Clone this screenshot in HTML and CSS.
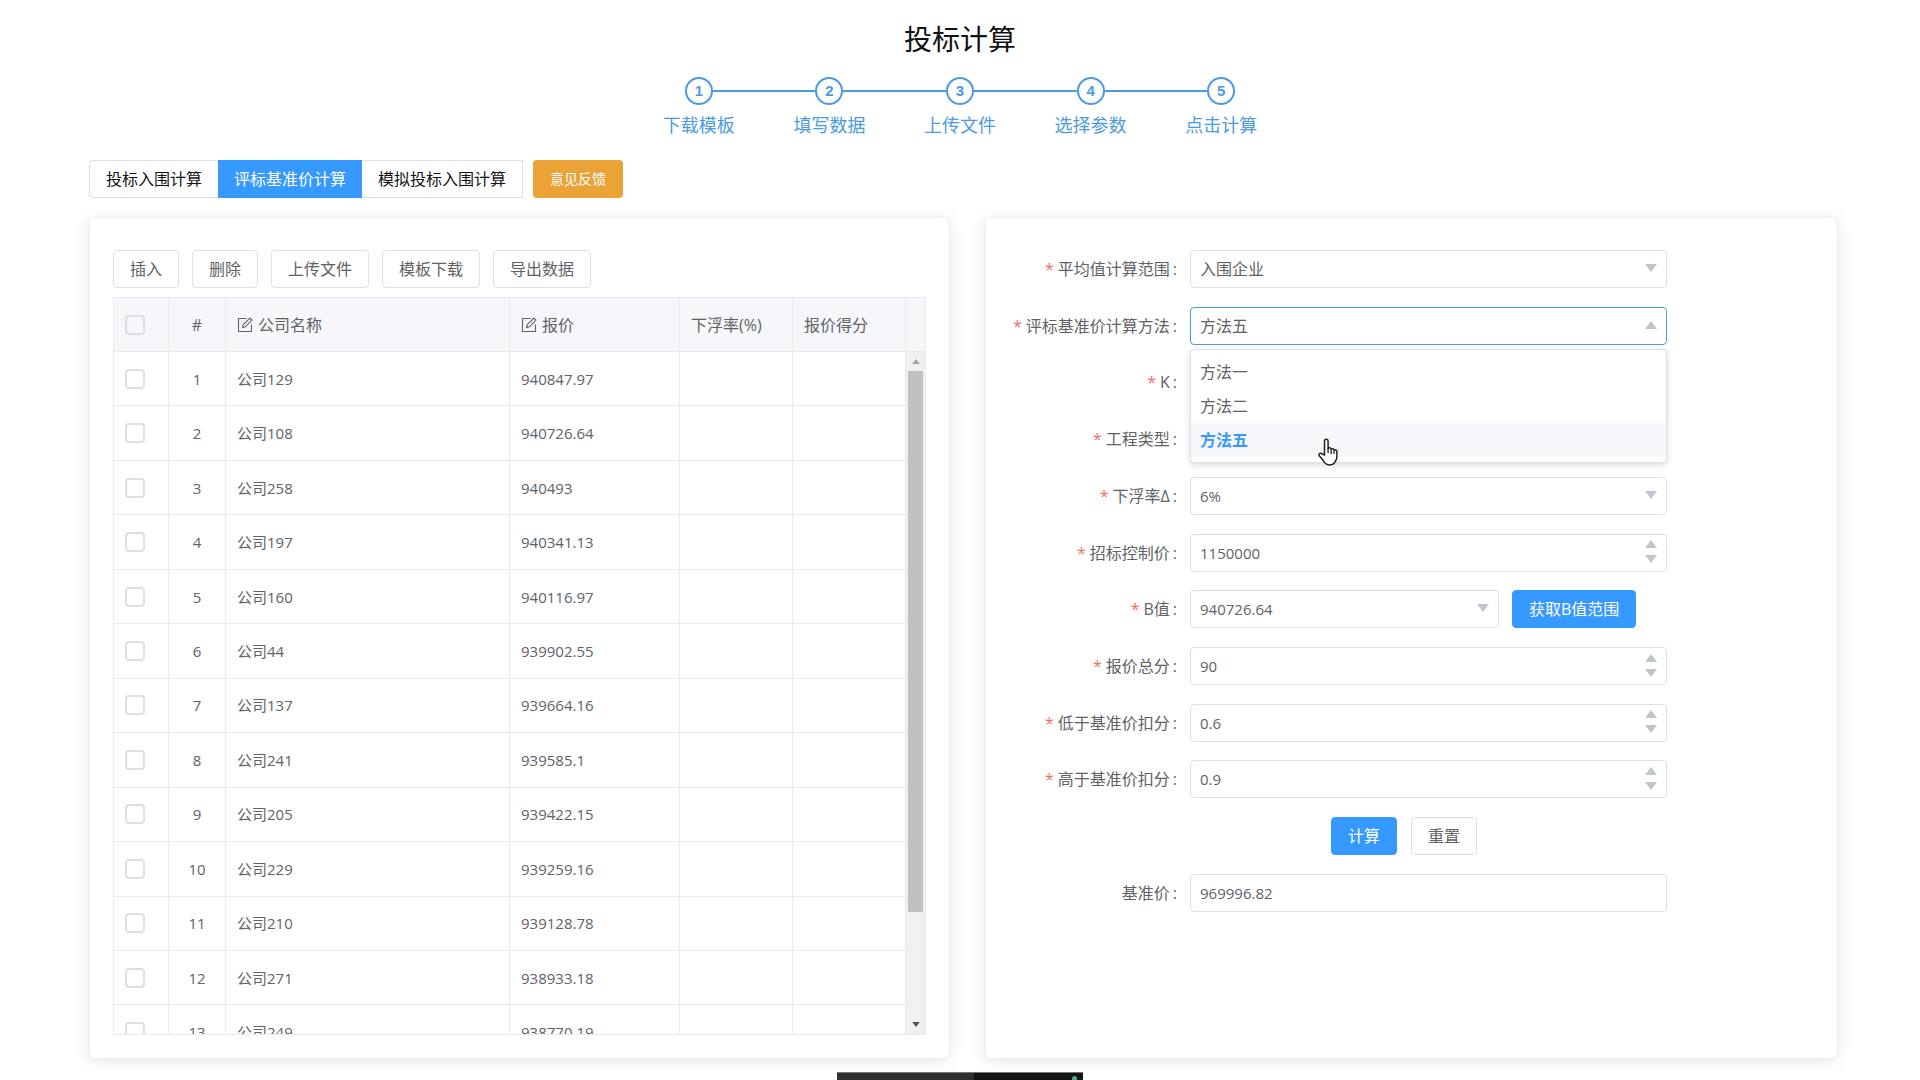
FILE: index.html
```html
<!DOCTYPE html>
<html lang="zh-CN">
<head>
<meta charset="utf-8">
<meta name="viewport" content="width=device-width, initial-scale=1">
<title>投标计算</title>
<link rel="stylesheet" href="styles.css">
</head>
<body>
<svg class="sprite" aria-hidden="true">
  <symbol id="edit" viewBox="0 0 16 16"><path d="M9.5 1.5H1.5v13h13V7.5M5.6 10.6l.7-3L13 1l2 2-6.6 6.8z" fill="none" stroke="currentColor" stroke-width="1.1"/></symbol>
  <symbol id="down" viewBox="0 0 12 8"><path d="M0 0h12L6 8z" fill="currentColor"/></symbol>
  <symbol id="up" viewBox="0 0 12 8"><path d="M0 8h12L6 0z" fill="currentColor"/></symbol>
</svg>

<header class="header">
  <h1 class="title">投标计算</h1>
  <ol class="steps">
    <li class="step"><div class="step-head"><span class="step-num">1</span></div><div class="step-label">下载模板</div></li>
    <li class="step"><div class="step-head"><span class="step-num">2</span></div><div class="step-label">填写数据</div></li>
    <li class="step"><div class="step-head"><span class="step-num">3</span></div><div class="step-label">上传文件</div></li>
    <li class="step"><div class="step-head"><span class="step-num">4</span></div><div class="step-label">选择参数</div></li>
    <li class="step"><div class="step-head"><span class="step-num">5</span></div><div class="step-label">点击计算</div></li>
  </ol>
</header>

<main class="page">
  <nav class="toolbar">
    <div class="tabs">
      <button class="tab" type="button">投标入围计算</button>
      <button class="tab tab-active" type="button">评标基准价计算</button>
      <button class="tab" type="button">模拟投标入围计算</button>
    </div>
    <button class="feedback" type="button">意见反馈</button>
  </nav>

  <div class="panels">
    <section class="card">
      <div class="actions">
        <button class="btn" type="button">插入</button>
        <button class="btn" type="button">删除</button>
        <button class="btn" type="button">上传文件</button>
        <button class="btn" type="button">模板下载</button>
        <button class="btn" type="button">导出数据</button>
      </div>
      <div class="grid">
        <div class="grid-head">
          <table class="table">
            <colgroup><col class="c-check"><col class="c-num"><col><col class="c-price"><col class="c-rate"><col class="c-rate"></colgroup>
            <thead><tr>
              <th><input type="checkbox" class="check" aria-label="全选"></th>
              <th class="center">#</th>
              <th><span class="th"><svg class="edit"><use href="#edit"/></svg>公司名称</span></th>
              <th><span class="th"><svg class="edit"><use href="#edit"/></svg>报价</span></th>
              <th>下浮率(%)</th>
              <th>报价得分</th>
            </tr></thead>
          </table>
          <div class="gutter"></div>
        </div>
        <div class="grid-body">
          <div class="viewport">
            <table class="table rows">
              <colgroup><col class="c-check"><col class="c-num"><col><col class="c-price"><col class="c-rate"><col class="c-rate"></colgroup>
              <tbody>
              <tr><td><input type="checkbox" class="check" aria-label="公司129"></td><td class="center">1</td><td>公司129</td><td>940847.97</td><td></td><td></td></tr>
              <tr><td><input type="checkbox" class="check" aria-label="公司108"></td><td class="center">2</td><td>公司108</td><td>940726.64</td><td></td><td></td></tr>
              <tr><td><input type="checkbox" class="check" aria-label="公司258"></td><td class="center">3</td><td>公司258</td><td>940493</td><td></td><td></td></tr>
              <tr><td><input type="checkbox" class="check" aria-label="公司197"></td><td class="center">4</td><td>公司197</td><td>940341.13</td><td></td><td></td></tr>
              <tr><td><input type="checkbox" class="check" aria-label="公司160"></td><td class="center">5</td><td>公司160</td><td>940116.97</td><td></td><td></td></tr>
              <tr><td><input type="checkbox" class="check" aria-label="公司44"></td><td class="center">6</td><td>公司44</td><td>939902.55</td><td></td><td></td></tr>
              <tr><td><input type="checkbox" class="check" aria-label="公司137"></td><td class="center">7</td><td>公司137</td><td>939664.16</td><td></td><td></td></tr>
              <tr><td><input type="checkbox" class="check" aria-label="公司241"></td><td class="center">8</td><td>公司241</td><td>939585.1</td><td></td><td></td></tr>
              <tr><td><input type="checkbox" class="check" aria-label="公司205"></td><td class="center">9</td><td>公司205</td><td>939422.15</td><td></td><td></td></tr>
              <tr><td><input type="checkbox" class="check" aria-label="公司229"></td><td class="center">10</td><td>公司229</td><td>939259.16</td><td></td><td></td></tr>
              <tr><td><input type="checkbox" class="check" aria-label="公司210"></td><td class="center">11</td><td>公司210</td><td>939128.78</td><td></td><td></td></tr>
              <tr><td><input type="checkbox" class="check" aria-label="公司271"></td><td class="center">12</td><td>公司271</td><td>938933.18</td><td></td><td></td></tr>
              <tr><td><input type="checkbox" class="check" aria-label="公司249"></td><td class="center">13</td><td>公司249</td><td>938770.19</td><td></td><td></td></tr>
              </tbody>
            </table>
          </div>
          <div class="scrollbar" aria-hidden="true">
            <span class="scroll-end scroll-top"><svg class="scroll-arrow"><use href="#up"/></svg></span>
            <span class="track"><span class="thumb"></span></span>
            <span class="scroll-end"><svg class="scroll-arrow"><use href="#down"/></svg></span>
          </div>
        </div>
      </div>
    </section>

    <section class="card">
      <form class="form">
        <div class="row">
          <label class="label required" for="range">平均值计算范围<span class="colon">:</span></label>
          <div class="field"><select class="control" id="range"><option>入围企业</option></select><svg class="caret"><use href="#down"/></svg></div>
        </div>
        <div class="row">
          <label class="label required" for="method">评标基准价计算方法<span class="colon">:</span></label>
          <div class="field">
            <select class="control control-open" id="method"><option>方法五</option><option>方法一</option><option>方法二</option></select><svg class="caret"><use href="#up"/></svg>
            <ul class="menu" role="listbox" aria-label="评标基准价计算方法">
              <li class="option" role="option">方法一</li>
              <li class="option" role="option">方法二</li>
              <li class="option option-active" role="option" aria-selected="true">方法五</li>
            </ul>
            <svg class="cursor" viewBox="0 0 20 28" aria-hidden="true"><path d="M6.500 17V3.200c0-2.600 3.600-2.600 3.600 0v7.200c.5-1 2.800-.8 3 .7.800-.8 2.700-.5 2.900 1 .9-.7 2.900-.2 2.900 1.600V19c0 2.500-1.200 3.600-1.900 5-.8 1.600-2.200 2.900-5 2.900-3.300 0-4.800-1.300-6.200-3.600L1.300 17.700c-1-2.200 1.300-3.400 2.900-1.700z" fill="#fff" stroke="#222" stroke-width="1.500" stroke-linejoin="round"/><path d="M10.100 10v5M13.100 11.500V16M16 12.500V16" fill="none" stroke="#222" stroke-width="1.300"/></svg>
          </div>
        </div>
        <div class="row">
          <label class="label required" for="k">K<span class="colon">:</span></label>
          <div class="field"><select class="control" id="k"></select></div>
        </div>
        <div class="row">
          <label class="label required" for="type">工程类型<span class="colon">:</span></label>
          <div class="field"><select class="control" id="type"></select></div>
        </div>
        <div class="row">
          <label class="label required" for="delta">下浮率Δ<span class="colon">:</span></label>
          <div class="field"><select class="control num" id="delta"><option>6%</option></select><svg class="caret"><use href="#down"/></svg></div>
        </div>
        <div class="row">
          <label class="label required" for="limit">招标控制价<span class="colon">:</span></label>
          <div class="field"><input class="control num" id="limit" value="1150000"><span class="spin"><button class="spin-btn" type="button" aria-label="增加"><svg class="tri"><use href="#up"/></svg></button><button class="spin-btn" type="button" aria-label="减少"><svg class="tri"><use href="#down"/></svg></button></span></div>
        </div>
        <div class="row">
          <label class="label required" for="b">B值<span class="colon">:</span></label>
          <div class="pair">
            <div class="field"><select class="control num" id="b"><option>940726.64</option></select><svg class="caret"><use href="#down"/></svg></div>
            <button class="btn btn-primary" type="button">获取B值范围</button>
          </div>
        </div>
        <div class="row">
          <label class="label required" for="total">报价总分<span class="colon">:</span></label>
          <div class="field"><input class="control num" id="total" value="90"><span class="spin"><button class="spin-btn" type="button" aria-label="增加"><svg class="tri"><use href="#up"/></svg></button><button class="spin-btn" type="button" aria-label="减少"><svg class="tri"><use href="#down"/></svg></button></span></div>
        </div>
        <div class="row">
          <label class="label required" for="below">低于基准价扣分<span class="colon">:</span></label>
          <div class="field"><input class="control num" id="below" value="0.6"><span class="spin"><button class="spin-btn" type="button" aria-label="增加"><svg class="tri"><use href="#up"/></svg></button><button class="spin-btn" type="button" aria-label="减少"><svg class="tri"><use href="#down"/></svg></button></span></div>
        </div>
        <div class="row">
          <label class="label required" for="above">高于基准价扣分<span class="colon">:</span></label>
          <div class="field"><input class="control num" id="above" value="0.9"><span class="spin"><button class="spin-btn" type="button" aria-label="增加"><svg class="tri"><use href="#up"/></svg></button><button class="spin-btn" type="button" aria-label="减少"><svg class="tri"><use href="#down"/></svg></button></span></div>
        </div>
        <div class="submit">
          <button class="btn btn-primary" type="button">计算</button>
          <button class="btn" type="reset">重置</button>
        </div>
        <div class="row">
          <label class="label" for="base">基准价<span class="colon">:</span></label>
          <div class="field"><input class="control num" id="base" value="969996.82" readonly></div>
        </div>
      </form>
    </section>
  </div>
</main>
<div class="dock" aria-hidden="true"><span class="dock-main"></span><span class="dock-side"><span class="dock-dot"></span></span></div>
</body>
</html>
```
FILE: styles.css
```css
* { box-sizing: border-box; }

body {
  margin: 0;
  background: #fff;
  color: #606266;
  font: 16px/24px "Open Sans", "Noto Sans CJK SC", sans-serif;
}

button, input, select { font: inherit; color: inherit; margin: 0; }
button { cursor: pointer; }
.sprite { display: none; }

/* Header and steps */
.header { padding-top: 19px; }
.title {
  margin: 0 0 18px;
  color: #111;
  font-size: 28px;
  font-weight: 400;
  line-height: 40px;
  text-align: center;
}
.steps {
  display: flex;
  max-width: 653px;
  margin: 0 auto;
  padding: 0;
  list-style: none;
  color: #4b9ae3;
}
.step { flex: 1; text-align: center; }
.step-head { display: flex; align-items: center; }
.step-head::before, .step-head::after {
  content: "";
  flex: 1;
  height: 2px;
  background: #4b9ae3;
}
.step:first-child .step-head::before,
.step:last-child .step-head::after { background: none; }
.step-num {
  width: 28px;
  height: 28px;
  border: 2px solid #4b9ae3;
  border-radius: 50%;
  font: bold 15px/24px "Liberation Sans", sans-serif;
}
.step-label { margin-top: 8px; font-size: 18px; }

/* Tabs */
.page { padding: 23px 82px 23px 89px; }
.toolbar { display: flex; gap: 10px; margin-bottom: 18px; }
.tabs { display: flex; }
.tab {
  height: 38px;
  padding: 0 16px;
  border: 1px solid #dcdfe6;
  border-left: 0;
  background: #fff;
  color: #111;
}
.tab:first-child { border-left: 1px solid #dcdfe6; border-right: 0; border-radius: 4px 0 0 4px; }
.tab-active { padding: 0 15px 0 16px; border-color: #3699ff; background: #3699ff; color: #fff; }
.feedback {
  height: 38px;
  padding: 0 17px;
  border: 0;
  border-radius: 4px;
  background: #eba337;
  color: #fff;
  font-size: 14px;
}

/* Panels */
.panels { display: grid; grid-template-columns: 860fr 852fr; gap: 35px; }
.card {
  min-width: 0;
  padding: 32px 23px 23px;
  border: 1px solid #ebeef5;
  border-radius: 5px;
  background: #fff;
  box-shadow: 0 2px 15px rgba(0, 0, 0, 0.1);
}
.actions { display: flex; gap: 13px; margin-bottom: 9px; }
.toolbar + .panels { margin-top: 19px; }
.btn {
  height: 38px;
  padding: 0 16px;
  border: 1px solid #dcdfe6;
  border-radius: 4px;
  background: #fff;
  white-space: nowrap;
}
.btn-primary { border-color: #3699ff; background: #3699ff; color: #fff; }

/* Data grid */
.grid { border: 1px solid #e8eaec; }
.grid-head { display: flex; background: #f5f7fa; }
.table {
  flex: 1;
  width: 100%;
  border-collapse: separate;
  border-spacing: 0;
  table-layout: fixed;
}
.c-check { width: 55px; }
.c-num { width: 57px; }
.c-price { width: 170px; }
.c-rate { width: 113px; }
.table th, .table td {
  padding: 0 11px;
  border-right: 1px solid #e8eaec;
  border-bottom: 1px solid #e8eaec;
  text-align: left;
  font-weight: 400;
}
.table th { height: 54px; }
.table .center { text-align: center; }
.th { display: flex; align-items: center; gap: 5px; }
.edit { width: 16px; height: 16px; }
.gutter { width: 19px; border-bottom: 1px solid #e8eaec; }
.grid-body { display: flex; height: 682px; }
.viewport { flex: 1; overflow: hidden; }
.rows { height: 708px; font-size: 15px; }
.check {
  display: block;
  width: 20px;
  height: 20px;
  appearance: none;
  border: 2px solid #dcdfe6;
  border-radius: 4px;
  background: #fff;
}
.grid-head .check { background: transparent; }
.scrollbar {
  display: flex;
  flex-direction: column;
  width: 19px;
  background: #f0f0f0;
}
.scroll-end {
  display: flex;
  align-items: center;
  justify-content: center;
  height: 19px;
  color: #505050;
}
.scroll-top { color: #a3a3a3; }
.scroll-arrow { width: 8px; height: 5px; }
.track { flex: 1; padding: 0 2px; }
.thumb { display: block; height: 84%; background: #c1c1c1; }

/* Form */
.form {
  display: flex;
  flex-direction: column;
  justify-content: space-between;
  min-height: 662px;
}
.row { display: grid; grid-template-columns: 168px minmax(0, 477px); gap: 13px; }
.label { line-height: 38px; text-align: right; white-space: nowrap; }
.required::before { content: "*"; margin-right: 4px; color: #f56c6c; }
.colon { margin-left: 3px; }
.field { position: relative; }
.control {
  display: block;
  width: 100%;
  height: 38px;
  padding: 0 9px;
  appearance: none;
  border: 1px solid #dcdfe6;
  border-radius: 4px;
  outline: 0;
  background: #fff;
}
.num { font-size: 15px; }
.control-open { border-color: #4b9ae3; }
.caret {
  position: absolute;
  top: 14px;
  right: 10px;
  width: 12px;
  height: 8px;
  color: #c0c4cc;
  pointer-events: none;
}
.spin {
  position: absolute;
  top: 3px;
  right: 10px;
  display: flex;
  flex-direction: column;
}
.spin-btn {
  display: flex;
  align-items: center;
  height: 15px;
  padding: 0;
  border: 0;
  background: none;
  color: #c0c4cc;
}
.tri { width: 12px; height: 8px; }
.pair { display: grid; grid-template-columns: minmax(0, 309px) auto; justify-content: start; gap: 13px; }
.menu {
  position: absolute;
  z-index: 1;
  top: 42px;
  left: 0;
  right: 0;
  margin: 0;
  padding: 5px 0;
  border: 1px solid #dcdfe6;
  border-radius: 4px;
  background: #fff;
  box-shadow: 0 2px 6px rgba(0, 0, 0, 0.15);
  list-style: none;
}
.option { padding: 0 9px; line-height: 34px; }
.option-active { background: #f5f7fa; color: #3699ff; font-weight: 700; }
.cursor {
  position: absolute;
  z-index: 2;
  top: 131px;
  left: 128px;
  width: 20px;
  height: 28px;
}
.submit { display: flex; gap: 14px; padding-left: 322px; }

/* Floating strip at the window's lower edge */
.dock {
  position: fixed;
  bottom: 0;
  left: 50%;
  display: flex;
  width: 246px;
  height: 8px;
  margin-left: -123px;
  border-top: 1px solid #777;
}
.dock-main { flex: 1; background: #303030; }
.dock-side {
  display: flex;
  width: 109px;
  justify-content: flex-end;
  padding: 3px 6px 0 0;
  background: #141414;
}
.dock-dot { width: 5px; border-radius: 3px 3px 0 0; background: #4fa890; }
```
